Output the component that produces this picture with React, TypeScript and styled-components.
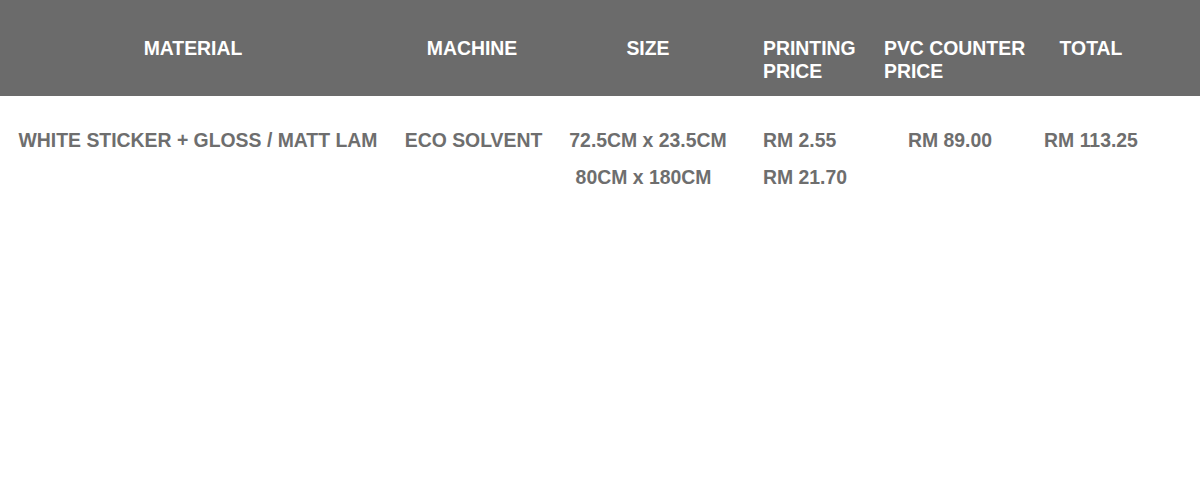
import React from "react";
import styled, { createGlobalStyle } from "styled-components";

const Global = createGlobalStyle`
  html, body { margin: 0; padding: 0; background: #ffffff; }
  body { font-family: "Liberation Sans", Arial, sans-serif; }
`;

const Table = styled.table`
  width: 1200px;
  border-collapse: collapse;
  table-layout: fixed;
  font-family: "Liberation Sans", Arial, sans-serif;
  font-size: 19.4px;
  font-weight: 700;
  line-height: 23px;
`;

const HeadRow = styled.tr`
  background: #6b6b6b;
  height: 96px;
`;

type Align = "left" | "center";

const Th = styled.th<{ $align?: Align; $pad?: number }>`
  color: #ffffff;
  font-weight: 700;
  vertical-align: top;
  text-align: ${(p) => p.$align ?? "center"};
  padding: 37px 2px 0 ${(p) => p.$pad ?? 2}px;
`;

const Td = styled.td<{ $align?: Align; $pad?: number; $padR?: number; $first?: boolean }>`
  color: #6e6e6e;
  vertical-align: top;
  white-space: nowrap;
  text-align: ${(p) => p.$align ?? "center"};
  padding: ${(p) => (p.$first ? 33 : 7)}px ${(p) => p.$padR ?? 0}px 7px
    ${(p) => p.$pad ?? 0}px;
`;

const widths = [386, 172, 180, 132, 160, 122, 48];

export default function App() {
  return (
    <>
      <Global />
      <Table>
        <colgroup>
          {widths.map((w, i) => (
            <col key={i} style={{ width: w }} />
          ))}
        </colgroup>
        <thead>
          <HeadRow>
            <Th>MATERIAL</Th>
            <Th>MACHINE</Th>
            <Th>SIZE</Th>
            <Th $align="left" $pad={25}>PRINTING PRICE</Th>
            <Th $align="left" $pad={14}>PVC COUNTER PRICE</Th>
            <Th>TOTAL</Th>
            <Th />
          </HeadRow>
        </thead>
        <tbody>
          <tr>
            <Td $first $pad={10}>WHITE STICKER + GLOSS / MATT LAM</Td>
            <Td $first $pad={3}>ECO SOLVENT</Td>
            <Td $first>72.5CM x 23.5CM</Td>
            <Td $first $align="left" $pad={25}>RM 2.55</Td>
            <Td $first>RM 89.00</Td>
            <Td $first>RM 113.25</Td>
            <Td $first />
          </tr>
          <tr>
            <Td />
            <Td />
            <Td $padR={9}>80CM x 180CM</Td>
            <Td $align="left" $pad={25}>RM 21.70</Td>
            <Td />
            <Td />
            <Td />
          </tr>
        </tbody>
      </Table>
    </>
  );
}
